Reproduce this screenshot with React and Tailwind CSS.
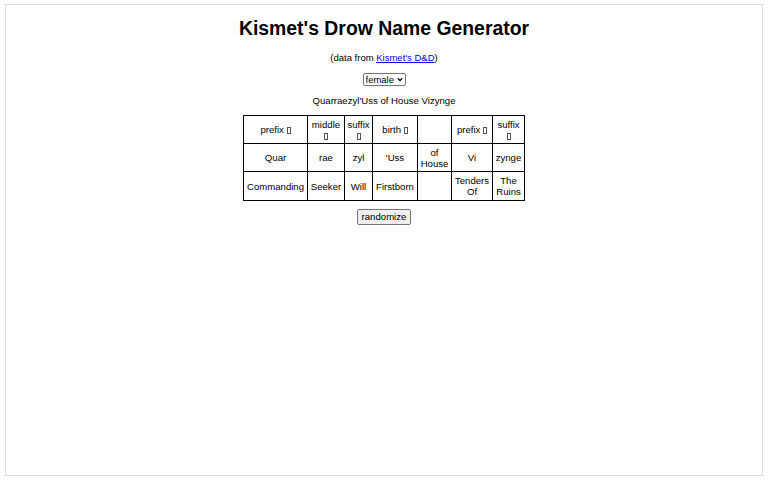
import React, { useState } from 'react';

const parts = [
  { head: 'prefix', w: 64, name: 'Quar', meaning: 'Commanding' },
  { head: 'middle', w: 37, name: 'rae', meaning: 'Seeker' },
  { head: 'suffix', w: 28, name: 'zyl', meaning: 'Will' },
  { head: 'birth', w: 45, name: "'Uss", meaning: 'Firstborn' },
  { head: null, w: 34, name: 'of House', meaning: '' },
  { head: 'prefix', w: 41, name: 'Vi', meaning: 'Tenders Of' },
  { head: 'suffix', w: 32, name: 'zynge', meaning: 'The Ruins' },
];

// small lock marker next to each column heading
const Lock = () => (
  <span className="inline-block w-[4px] h-[7px] border border-[#555] align-[-1px]" />
);

export default function App() {
  const [gender, setGender] = useState('female');

  return (
    <div className="w-[768px] h-[480px] bg-white pt-[4px] px-[5px] font-['Liberation_Sans',Arial,sans-serif] text-black">
      <div className="h-[472px] border border-[#dedede] flex flex-col items-center">
        <h1 className="text-[19.4px] font-bold leading-none mt-[14px]">Kismet's Drow Name Generator</h1>

        <p className="text-[9.5px] mt-[14px] leading-[12px]">
          (data from <a href="#" className="text-[#0000ee] underline">Kismet's D&amp;D</a>)
        </p>

        <div className="relative mt-[9px] inline-flex">
          <select
            value={gender}
            onChange={(e) => setGender(e.target.value)}
            className="appearance-none text-[9.5px] h-[13px] leading-[11px] border border-[#767676] rounded-[2px] pl-[2px] pr-[10px] bg-white"
          >
            <option value="female">female</option>
            <option value="male">male</option>
          </select>
          <svg className="absolute right-[3px] top-[4px] pointer-events-none" width="6" height="5" viewBox="0 0 6 5">
            <path d="M0.8 1.2 L3 3.6 L5.2 1.2" fill="none" stroke="#000" strokeWidth="1.3" />
          </svg>
        </div>

        <p className="text-[9.6px] mt-[9px] leading-[12px]">Quarraezyl'Uss of House Vizynge</p>

        <table className="w-[281px] mt-[8px] border-collapse table-fixed text-[9.6px] leading-[11px] text-center">
          <colgroup>
            {parts.map((p, i) => (
              <col key={i} style={{ width: p.w }} />
            ))}
          </colgroup>
          <tbody>
            <tr className="h-[28px]">
              {parts.map((p, i) => (
                <td key={i} className="border border-black px-[2px]">
                  {p.head && (
                    <>
                      {p.head} <Lock />
                    </>
                  )}
                </td>
              ))}
            </tr>
            <tr className="h-[28px]">
              {parts.map((p, i) => (
                <td key={i} className="border border-black px-[2px]">{p.name}</td>
              ))}
            </tr>
            <tr className="h-[29px]">
              {parts.map((p, i) => (
                <td key={i} className="border border-black px-[2px]">{p.meaning}</td>
              ))}
            </tr>
          </tbody>
        </table>

        <button className="mt-[8px] text-[9.6px] leading-[12px] h-[16px] px-[4px] bg-[#efefef] border border-[#767676] rounded-[2px]">
          randomize
        </button>
      </div>
    </div>
  );
}
